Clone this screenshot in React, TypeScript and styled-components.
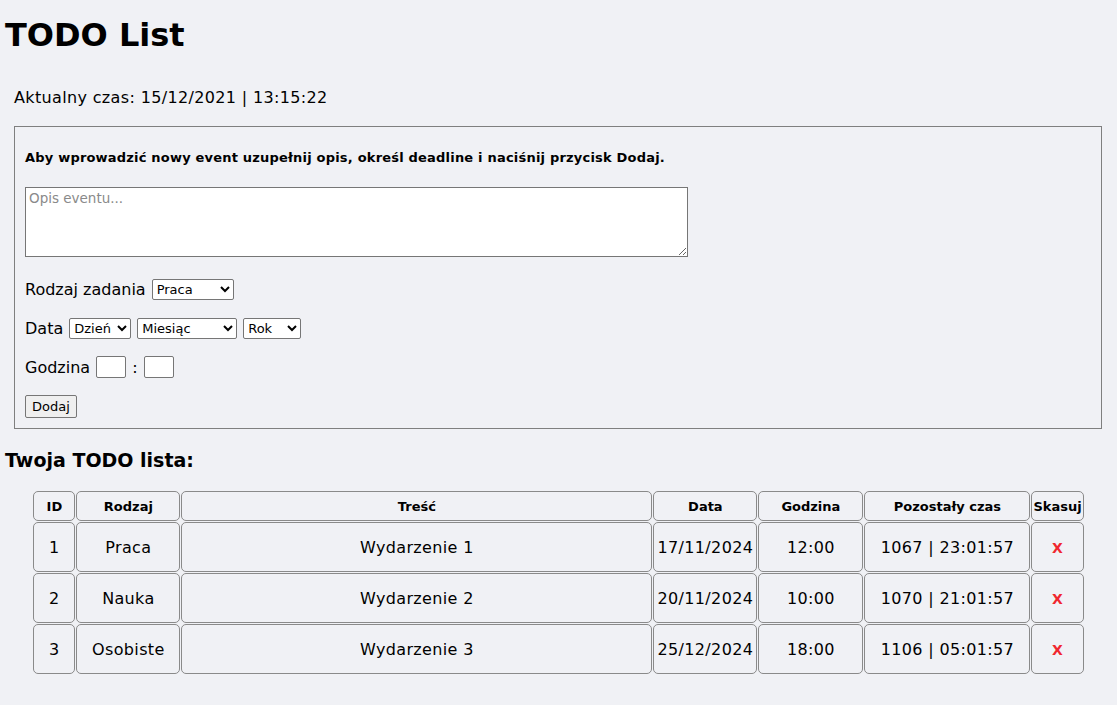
import { ReactElement } from "react";
import styled, { createGlobalStyle } from "styled-components";

const GlobalStyle = createGlobalStyle`
    body {
        margin: 0;
        padding: 0 5px;
        background: rgb(240, 241, 245);
        font-family: "DejaVu Sans", Verdana, sans-serif;
        color: #000;
    }
`;

const todos = [
    { id: 1, kind: "Praca", text: "Wydarzenie 1", date: "17/11/2024", hour: "12:00", left: "1067 | 23:01:57" },
    { id: 2, kind: "Nauka", text: "Wydarzenie 2", date: "20/11/2024", hour: "10:00", left: "1070 | 21:01:57" },
    { id: 3, kind: "Osobiste", text: "Wydarzenie 3", date: "25/12/2024", hour: "18:00", left: "1106 | 05:01:57" },
];

export default function App(): ReactElement {
    return (
        <>
            <GlobalStyle />
            <Title>TODO List</Title>
            <Clock>Aktualny czas: 15/12/2021 | 13:15:22</Clock>
            <FormBox>
                <Hint>Aby wprowadzić nowy event uzupełnij opis, określ deadline i naciśnij przycisk Dodaj.</Hint>
                <Description placeholder="Opis eventu..." />
                <FieldRow>
                    Rodzaj zadania
                    <Select $width={82}>
                        <option>Praca</option>
                        <option>Nauka</option>
                        <option>Osobiste</option>
                    </Select>
                </FieldRow>
                <FieldRow>
                    Data
                    <Select $width={62}>
                        <option>Dzień</option>
                    </Select>
                    <Select $width={100}>
                        <option>Miesiąc</option>
                    </Select>
                    <Select $width={58}>
                        <option>Rok</option>
                    </Select>
                </FieldRow>
                <FieldRow>
                    Godzina
                    <TimeInput />
                    <span>:</span>
                    <TimeInput />
                </FieldRow>
                <AddButton>Dodaj</AddButton>
            </FormBox>
            <ListTitle>Twoja TODO lista:</ListTitle>
            <Table>
                <thead>
                    <tr>
                        <Th $width={42}>ID</Th>
                        <Th $width={104}>Rodzaj</Th>
                        <Th $width={471}>Treść</Th>
                        <Th $width={104}>Data</Th>
                        <Th $width={105}>Godzina</Th>
                        <Th $width={166}>Pozostały czas</Th>
                        <Th $width={52}>Skasuj</Th>
                    </tr>
                </thead>
                <tbody>
                    {todos.map(todo => (
                        <tr key={todo.id}>
                            <Td>{todo.id}</Td>
                            <Td>{todo.kind}</Td>
                            <Td>{todo.text}</Td>
                            <Td>{todo.date}</Td>
                            <Td>{todo.hour}</Td>
                            <Td>{todo.left}</Td>
                            <Td><Remove>X</Remove></Td>
                        </tr>
                    ))}
                </tbody>
            </Table>
        </>
    );
}

const Title = styled.h1`
    font-size: 32px;
    font-weight: bold;
    margin: 16px 0 0 0;
`;

const Clock = styled.p`
    font-size: 16px;
    letter-spacing: 0.35px;
    margin: 34px 9px 0 9px;
`;

const FormBox = styled.div`
    margin: 19px 10px 0 9px;
    border: 1px solid #7f7f7f;
    padding: 23px 10px 10px 10px;
`;

const Hint = styled.p`
    font-weight: bold;
    font-size: 13px;
    letter-spacing: 0.2px;
    margin: 0 0 22px 0;
`;

const Description = styled.textarea`
    display: block;
    width: 663px;
    height: 70px;
    box-sizing: border-box;
    border: 1px solid #767676;
    border-radius: 0;
    background: #fff;
    padding: 2px 3px;
    font-family: "DejaVu Sans", sans-serif;
    font-size: 13.5px;
    margin: 0 0 21px 0;

    &::placeholder {
        color: #8a8a8a;
    }
`;

const FieldRow = styled.div`
    display: flex;
    align-items: center;
    gap: 6px;
    font-size: 16px;
    height: 22px;
    margin-bottom: 17px;
`;

const Select = styled.select<{ $width: number }>`
    width: ${p => p.$width}px;
    height: 21px;
    font-family: "DejaVu Sans", sans-serif;
    font-size: 13px;
    background: #fff;
    border: 1px solid #767676;
    border-radius: 2px;
    margin: 0;
`;

const TimeInput = styled.input`
    width: 30px;
    height: 22px;
    box-sizing: border-box;
    border: 1px solid #767676;
    border-radius: 2px;
    background: #fff;
    margin: 0;
`;

const AddButton = styled.button`
    display: block;
    box-sizing: border-box;
    font-family: "DejaVu Sans", sans-serif;
    font-size: 13px;
    height: 23px;
    padding: 0 6px;
    background: #efefef;
    border: 1px solid #767676;
    border-radius: 2px;
    color: #000;
`;

const ListTitle = styled.h3`
    font-size: 19px;
    font-weight: bold;
    margin: 20px 0 19px 0;
`;

const Table = styled.table`
    margin: 0 auto;
    border-spacing: 1px;
    text-align: center;
`;

const Th = styled.th<{ $width: number }>`
    box-sizing: border-box;
    width: ${p => p.$width}px;
    font-size: 13px;
    font-weight: bold;
    height: 30px;
    padding: 1px;
    border: 1px solid #8a8a8a;
    border-radius: 5px;
`;

const Td = styled.td`
    box-sizing: border-box;
    font-size: 16px;
    letter-spacing: 0.35px;
    height: 50px;
    padding: 1px;
    border: 1px solid #8a8a8a;
    border-radius: 5px;
`;

const Remove = styled.span`
    color: #f0272f;
    font-weight: bold;
    font-size: 14px;
    cursor: pointer;
`;
